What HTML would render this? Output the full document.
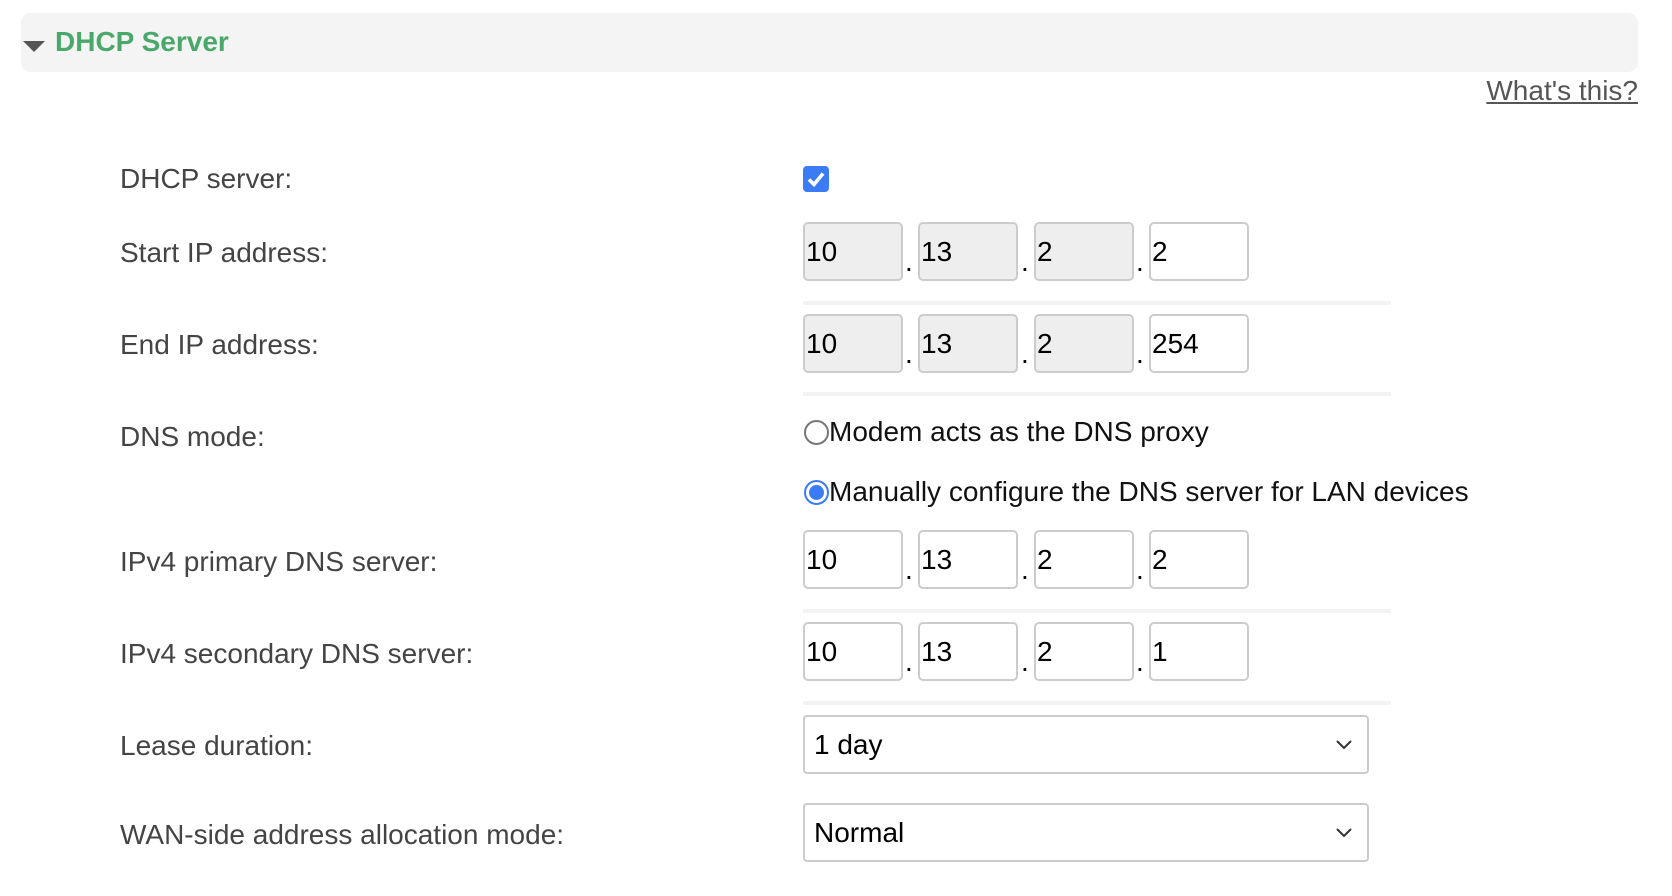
<!DOCTYPE html>
<html><head><style>
body{margin:0;width:1672px;height:896px;background:#fff;font-family:"Liberation Sans",Arial,sans-serif;position:relative;overflow:hidden}
.a{position:absolute}
.hdr{left:21px;top:13px;width:1617px;height:59px;background:#f4f4f4;border-radius:10px}
.tri{left:23px;top:41px;width:0;height:0;border-left:11px solid transparent;border-right:11px solid transparent;border-top:11px solid #555}
.ttl{left:55px;top:26px;font-size:28px;font-weight:bold;color:#4aa96a}
.wt{right:34px;top:75px;font-size:28px;color:#555;text-decoration:underline}
.lb{left:120px;font-size:28px;color:#444;line-height:30px}
.in{box-sizing:border-box;width:100px;height:59px;border:2px solid #ccc;border-radius:5px;font-size:28px;line-height:55px;padding-left:1px;color:#000}
.g{background:#eee}
.d{font-size:28px;color:#000}
.sep{left:803px;width:588px;height:4px;background:#f3f3f3}
.sel{box-sizing:border-box;left:803px;width:566px;height:59px;border:2px solid #ccc;border-radius:4px;font-size:28px;line-height:55px;padding-left:9px;color:#000}
.rad{box-sizing:border-box;width:25px;height:25px;border-radius:50%;border:2px solid #777;background:#fff}
.rt{left:829px;font-size:28px;color:#111;line-height:32px}
</style></head><body>
<div class="a hdr"></div><div class="a tri"></div><div class="a ttl">DHCP Server</div>
<div class="a wt">What's this?</div>

<div class="a lb" style="top:164px">DHCP server:</div>
<div class="a" style="left:803px;top:166px;width:26px;height:26px;background:#3b7cf6;border-radius:4px">
<svg width="26" height="26" viewBox="0 0 26 26"><path d="M6 13.5 L11 18.5 L20 7.5" stroke="#fff" stroke-width="3.6" fill="none"/></svg></div>

<div class="a lb" style="top:238px">Start IP address:</div>
<div class="a lb" style="top:330px">End IP address:</div>
<div class="a lb" style="top:422px">DNS mode:</div>
<div class="a lb" style="top:547px">IPv4 primary DNS server:</div>
<div class="a lb" style="top:639px">IPv4 secondary DNS server:</div>
<div class="a lb" style="top:731px">Lease duration:</div>
<div class="a lb" style="top:820px">WAN-side address allocation mode:</div>

<div class="a" style="left:803px;top:222px">
<div class="a in g" style="left:0">10</div><div class="a d" style="left:102px;top:24px">.</div>
<div class="a in g" style="left:115px">13</div><div class="a d" style="left:218px;top:24px">.</div>
<div class="a in g" style="left:231px">2</div><div class="a d" style="left:333px;top:24px">.</div>
<div class="a in" style="left:346px">2</div></div>
<div class="a sep" style="top:301px"></div>
<div class="a" style="left:803px;top:314px">
<div class="a in g" style="left:0">10</div><div class="a d" style="left:102px;top:24px">.</div>
<div class="a in g" style="left:115px">13</div><div class="a d" style="left:218px;top:24px">.</div>
<div class="a in g" style="left:231px">2</div><div class="a d" style="left:333px;top:24px">.</div>
<div class="a in" style="left:346px">254</div></div>
<div class="a sep" style="top:392px"></div>

<div class="a rad" style="left:804px;top:420px"></div>
<div class="a rt" style="top:416px">Modem acts as the DNS proxy</div>
<div class="a rad" style="left:804px;top:480px;border-color:#3b7cf6"><div class="a" style="left:3px;top:3px;width:15px;height:15px;border-radius:50%;background:#3b7cf6"></div></div>
<div class="a rt" style="top:476px">Manually configure the DNS server for LAN devices</div>

<div class="a" style="left:803px;top:530px">
<div class="a in" style="left:0">10</div><div class="a d" style="left:102px;top:24px">.</div>
<div class="a in" style="left:115px">13</div><div class="a d" style="left:218px;top:24px">.</div>
<div class="a in" style="left:231px">2</div><div class="a d" style="left:333px;top:24px">.</div>
<div class="a in" style="left:346px">2</div></div>
<div class="a sep" style="top:609px"></div>
<div class="a" style="left:803px;top:622px">
<div class="a in" style="left:0">10</div><div class="a d" style="left:102px;top:24px">.</div>
<div class="a in" style="left:115px">13</div><div class="a d" style="left:218px;top:24px">.</div>
<div class="a in" style="left:231px">2</div><div class="a d" style="left:333px;top:24px">.</div>
<div class="a in" style="left:346px">1</div></div>
<div class="a sep" style="top:701px"></div>

<div class="a sel" style="top:715px">1 day<svg class="a" style="right:14px;top:22px" width="18" height="12" viewBox="0 0 18 12"><path d="M2 2 L9 9 L16 2" stroke="#333" stroke-width="2" fill="none"/></svg></div>
<div class="a sel" style="top:803px">Normal<svg class="a" style="right:14px;top:22px" width="18" height="12" viewBox="0 0 18 12"><path d="M2 2 L9 9 L16 2" stroke="#333" stroke-width="2" fill="none"/></svg></div>
</body></html>
